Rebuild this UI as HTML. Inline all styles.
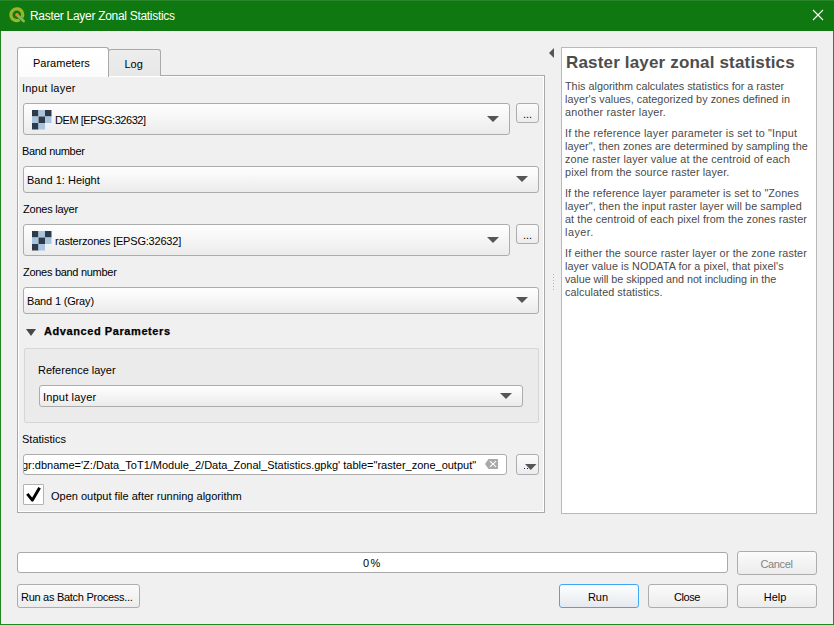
<!DOCTYPE html>
<html><head><meta charset="utf-8">
<style>
html,body{margin:0;padding:0;}
body{width:834px;height:625px;position:relative;overflow:hidden;background:#f0f0f0;font-family:"Liberation Sans",sans-serif;font-size:11px;color:#000;}
.a{position:absolute;}
.t{position:absolute;white-space:nowrap;line-height:13px;height:13px;}
.combo{position:absolute;box-sizing:border-box;border:1px solid #acacac;border-radius:3px;background:linear-gradient(#fefefe,#fafafa 25%,#ebebeb);}
.arrow{position:absolute;width:0;height:0;border-left:6px solid transparent;border-right:6px solid transparent;border-top:6px solid #555;}
.btn{position:absolute;white-space:nowrap;box-sizing:border-box;border:1px solid #adadad;border-radius:3px;background:linear-gradient(#fbfbfb,#ececec);text-align:center;line-height:25px;}
.help p{margin:0;}
.hl{position:absolute;white-space:nowrap;line-height:13px;font-size:10.8px;color:#4a4a4a;left:565px;}
</style></head><body>
<!-- title bar -->
<div class="a" style="left:0;top:0;width:834px;height:31px;background:#107810;"></div>
<div class="a" style="left:0;top:0;width:834px;height:1px;background:#2a852a;"></div>
<div class="a" style="left:0;top:31px;width:1px;height:594px;background:#238823;"></div>
<div class="a" style="left:833px;top:31px;width:1px;height:594px;background:#238823;"></div>
<div class="a" style="left:0;top:624px;width:834px;height:1px;background:#238823;"></div>
<svg class="a" style="left:6px;top:4px" width="22" height="22" viewBox="0 0 22 22">
  <path d="M13.57 15.91 A5.9 5.9 0 1 1 16.01 13.47" fill="none" stroke="#98b62c" stroke-width="3.2"/>
  <line x1="11.2" y1="11" x2="17.6" y2="17" stroke="#86b85a" stroke-width="2.8" stroke-linecap="round"/>
  <circle cx="10.9" cy="10.7" r="1.7" fill="#f2822a"/>
</svg>
<div class="t" style="left:30px;top:9px;font-size:12px;letter-spacing:-0.3px;color:#fff;line-height:14px;">Raster Layer Zonal Statistics</div>
<svg class="a" style="left:812px;top:9px" width="12" height="12" viewBox="0 0 12 12">
  <path d="M1 1 L11 11 M11 1 L1 11" stroke="#fff" stroke-width="1.1"/>
</svg>

<!-- tab pane -->
<div class="a" style="left:17px;top:75px;width:528px;height:438px;box-sizing:border-box;border:1px solid #a9a9a9;background:#f0f0f0;box-shadow:inset 0 0 0 1px #fff;"></div>
<div class="a" style="left:18px;top:76px;width:1px;height:436px;background:#fff;"></div>
<!-- Log tab -->
<div class="a" style="left:108px;top:49px;width:53px;height:27px;box-sizing:border-box;border:1px solid #a9a9a9;border-bottom:none;border-radius:3px 3px 0 0;background:linear-gradient(#ededed,#e7e7e7);"></div>
<div class="t" style="left:124.5px;top:58px;">Log</div>
<!-- Params tab -->
<div class="a" style="left:17px;top:47px;width:92px;height:30px;box-sizing:border-box;border:1px solid #a9a9a9;border-bottom:none;border-radius:3px 3px 0 0;background:linear-gradient(#ffffff,#fcfcfc);"></div>
<div class="t" style="left:33px;top:57px;">Parameters</div>

<!-- Input layer -->
<div class="t" style="left:22px;top:82px;letter-spacing:0.2px;">Input layer</div>
<div class="combo" style="left:23px;top:103px;width:487px;height:32px;"></div>
<svg class="a" style="left:32px;top:110px" width="20" height="20" viewBox="0 0 20 20">
 <rect x="0" y="0" width="6.5" height="6.5" fill="#2c3a4a"/><rect x="6.5" y="0" width="6.5" height="6.5" fill="#a9c4df"/><rect x="13" y="0" width="6.5" height="6.5" fill="#2c3a4a"/>
 <rect x="0" y="6.5" width="6.5" height="6.5" fill="#a9c4df"/><rect x="6.5" y="6.5" width="6.5" height="6.5" fill="#2c3a4a"/><rect x="13" y="6.5" width="6.5" height="6.5" fill="#a9c4df"/>
 <rect x="0" y="13" width="6.5" height="6.5" fill="#2c3a4a"/><rect x="6.5" y="13" width="6.5" height="6.5" fill="#a9c4df"/>
</svg>
<div class="t" style="left:55px;top:114px;letter-spacing:-0.45px;">DEM [EPSG:32632]</div>
<div class="arrow" style="left:487px;top:116px;"></div>
<div class="btn" style="left:516px;top:103px;width:23px;height:20px;line-height:20px;">...</div>

<!-- Band number -->
<div class="t" style="left:22px;top:145px;letter-spacing:-0.32px;">Band number</div>
<div class="combo" style="left:23px;top:166px;width:516px;height:27px;"></div>
<div class="t" style="left:27px;top:174px;">Band 1: Height</div>
<div class="arrow" style="left:516px;top:176px;"></div>

<!-- Zones layer -->
<div class="t" style="left:23px;top:203px;letter-spacing:-0.23px;">Zones layer</div>
<div class="combo" style="left:23px;top:224px;width:487px;height:32px;"></div>
<svg class="a" style="left:32px;top:231px" width="20" height="20" viewBox="0 0 20 20">
 <rect x="0" y="0" width="6.5" height="6.5" fill="#2c3a4a"/><rect x="6.5" y="0" width="6.5" height="6.5" fill="#a9c4df"/><rect x="13" y="0" width="6.5" height="6.5" fill="#2c3a4a"/>
 <rect x="0" y="6.5" width="6.5" height="6.5" fill="#a9c4df"/><rect x="6.5" y="6.5" width="6.5" height="6.5" fill="#2c3a4a"/><rect x="13" y="6.5" width="6.5" height="6.5" fill="#a9c4df"/>
 <rect x="0" y="13" width="6.5" height="6.5" fill="#2c3a4a"/><rect x="6.5" y="13" width="6.5" height="6.5" fill="#a9c4df"/>
</svg>
<div class="t" style="left:55px;top:235px;letter-spacing:-0.2px;">rasterzones [EPSG:32632]</div>
<div class="arrow" style="left:487px;top:237px;"></div>
<div class="btn" style="left:516px;top:224px;width:23px;height:20px;line-height:20px;">...</div>

<!-- Zones band number -->
<div class="t" style="left:23px;top:266px;letter-spacing:-0.29px;">Zones band number</div>
<div class="combo" style="left:23px;top:287px;width:516px;height:27px;"></div>
<div class="t" style="left:27px;top:295px;letter-spacing:-0.17px;">Band 1 (Gray)</div>
<div class="arrow" style="left:516px;top:297px;"></div>

<!-- Advanced -->
<div class="a" style="left:25.7px;top:329px;width:0;height:0;border-left:5.3px solid transparent;border-right:5.3px solid transparent;border-top:7px solid #484848;"></div>
<div class="t" style="left:44px;top:325px;font-weight:bold;letter-spacing:0.58px;-webkit-text-stroke:0.25px #000;">Advanced Parameters</div>
<div class="a" style="left:24px;top:348px;width:515px;height:75px;box-sizing:border-box;border:1px solid #d6d6d6;border-radius:2px;background:#ebebeb;"></div>
<div class="t" style="left:38px;top:364px;">Reference layer</div>
<div class="combo" style="left:39px;top:385px;width:484px;height:22px;"></div>
<div class="t" style="left:43px;top:391px;letter-spacing:0.18px;">Input layer</div>
<div class="arrow" style="left:500px;top:393px;"></div>

<!-- Statistics -->
<div class="t" style="left:22px;top:433px;">Statistics</div>
<div class="a" style="left:23px;top:454px;width:484px;height:21px;box-sizing:border-box;border:1px solid #acacac;border-radius:3px;background:#fff;overflow:hidden;">
  <div class="t" style="left:-2px;top:4px;">gr:dbname='Z:/Data_ToT1/Module_2/Data_Zonal_Statistics.gpkg' table="raster_zone_output"</div>
</div>
<svg class="a" style="left:485px;top:459px" width="14" height="10" viewBox="0 0 14 10">
  <path d="M3.5 0 H13 V10 H3.5 L0 5 Z" fill="#a9a9a9"/>
  <path d="M4.9 2.1 L11.1 7.9 M11.1 2.1 L4.9 7.9" stroke="#fff" stroke-width="1.1"/>
</svg>
<div class="btn" style="left:516px;top:454px;width:23px;height:21px;"></div>
<svg class="a" style="left:516px;top:454px" width="23" height="21" viewBox="0 0 23 21">
  <rect x="8" y="14" width="1" height="1" fill="#2a2060"/><rect x="11" y="14" width="1" height="1" fill="#2a2060"/><rect x="14" y="14" width="1" height="1" fill="#2a2060"/>
  <path d="M9 10 H20.5 L14.75 16 Z" fill="#555"/>
</svg>

<!-- checkbox -->
<div class="a" style="left:23px;top:484px;width:21px;height:21px;box-sizing:border-box;border:1px solid #b3b3b3;border-radius:1px;background:#fff;"></div>
<svg class="a" style="left:23px;top:484px" width="21" height="21" viewBox="0 0 21 21">
  <path d="M4.3 9.8 L9.3 16.2 L16.6 3.8" fill="none" stroke="#000" stroke-width="2.9" stroke-linejoin="round"/>
</svg>
<div class="t" style="left:51px;top:490px;">Open output file after running algorithm</div>

<!-- collapse arrow & splitter -->
<div class="a" style="left:549px;top:48px;width:0;height:0;border-top:5px solid transparent;border-bottom:5px solid transparent;border-right:5px solid #555;"></div>
<div class="a" style="left:553px;top:274px;width:1px;height:17px;background:repeating-linear-gradient(#b4b4b4 0 1px,transparent 1px 3px);"></div>

<!-- help panel -->
<div class="a" style="left:561px;top:47px;width:256px;height:467px;box-sizing:border-box;border:1px solid #b9b9b9;background:#fff;"></div>
<div class="t" style="left:566px;top:53px;font-size:17px;line-height:20px;height:20px;font-weight:bold;letter-spacing:0.17px;color:#4d4d4d;">Raster layer zonal statistics</div>
<div class="hl" style="top:80px;letter-spacing:0.013px;">This algorithm calculates statistics for a raster</div>
<div class="hl" style="top:92.9px;letter-spacing:0.043px;">layer's values, categorized by zones defined in</div>
<div class="hl" style="top:105.8px;letter-spacing:0.240px;">another raster layer.</div>
<div class="hl" style="top:127.1px;letter-spacing:0.200px;">If the reference layer parameter is set to "Input</div>
<div class="hl" style="top:140px;letter-spacing:0.050px;">layer", then zones are determined by sampling the</div>
<div class="hl" style="top:152.9px;letter-spacing:0.130px;">zone raster layer value at the centroid of each</div>
<div class="hl" style="top:165.8px;letter-spacing:0.138px;">pixel from the source raster layer.</div>
<div class="hl" style="top:187.1px;letter-spacing:0.115px;">If the reference layer parameter is set to "Zones</div>
<div class="hl" style="top:200px;letter-spacing:0.084px;">layer", then the input raster layer will be sampled</div>
<div class="hl" style="top:212.9px;letter-spacing:0.096px;">at the centroid of each pixel from the zones raster</div>
<div class="hl" style="top:225.8px;letter-spacing:0.500px;">layer.</div>
<div class="hl" style="top:247.1px;letter-spacing:0.153px;">If either the source raster layer or the zone raster</div>
<div class="hl" style="top:260px;letter-spacing:0.072px;">layer value is NODATA for a pixel, that pixel's</div>
<div class="hl" style="top:272.9px;letter-spacing:-0.042px;">value will be skipped and not including in the</div>
<div class="hl" style="top:285.8px;letter-spacing:0.067px;">calculated statistics.</div>

<!-- progress -->
<div class="a" style="left:17px;top:552px;width:711px;height:21px;box-sizing:border-box;border:1px solid #a9a9a9;border-radius:3px;background:#fff;"></div>
<div class="t" style="left:363px;top:557px;letter-spacing:1.3px;">0%</div>
<div class="btn" style="left:737px;top:551px;width:80px;height:24px;color:#838383;letter-spacing:-0.4px;padding-right:1px;">Cancel</div>

<!-- bottom buttons -->
<div class="btn" style="left:17px;top:584px;width:123px;height:24px;text-align:left;padding-left:3px;letter-spacing:-0.28px;">Run as Batch Process...</div>
<div class="btn" style="left:559px;top:584px;width:80px;height:24px;border-color:#40a6f6;background:linear-gradient(#fdfeff,#e5e9ee);padding-right:2px;">Run</div>
<div class="btn" style="left:648px;top:584px;width:80px;height:24px;letter-spacing:-0.4px;padding-right:2px;">Close</div>
<div class="btn" style="left:737px;top:584px;width:80px;height:24px;padding-right:4px;">Help</div>
</body></html>
